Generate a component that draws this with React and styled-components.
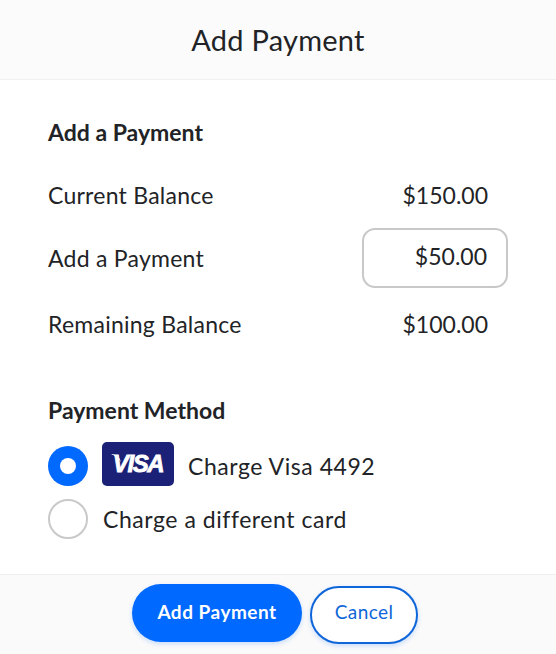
import React from "react";
import styled, { createGlobalStyle } from "styled-components";

const Global = createGlobalStyle`
  html, body { margin: 0; padding: 0; background: #fff; }
  body { font-family: "Lato", "Liberation Sans", sans-serif; color: #222326; }
`;

const Page = styled.div`
  width: 556px;
  height: 654px;
  display: flex;
  flex-direction: column;
  overflow: hidden;
`;

const Header = styled.header`
  height: 79px;
  flex: none;
  display: flex;
  align-items: center;
  justify-content: center;
  background: #fbfbfb;
  border-bottom: 1px solid #f0f0f0;
  font-size: 29px;
  letter-spacing: 0.25px;
`;

const Body = styled.main`
  flex: 1;
  padding: 39px 48px 0;
`;

const SectionTitle = styled.h2`
  margin: 0;
  height: 26px;
  line-height: 26px;
  font-size: 23px;
  font-weight: 700;
`;

const Row = styled.div`
  display: flex;
  align-items: center;
  justify-content: space-between;
  height: ${(p) => p.$h}px;
  margin-top: ${(p) => p.$mt}px;
  padding-right: ${(p) => (p.$flush ? 0 : 20)}px;
  font-size: 23px;
  letter-spacing: 0.25px;
`;

const Value = styled.span`
  letter-spacing: 0;
`;

const AmountBox = styled.div`
  width: 146px;
  height: 60px;
  box-sizing: border-box;
  display: flex;
  align-items: center;
  justify-content: flex-end;
  padding: 0 19px 5px 0;
  border: 2px solid #c8c8c8;
  border-radius: 13px;
  letter-spacing: 0;
`;

const MethodTitle = styled(SectionTitle)`
  margin-top: 58px;
`;

const Option = styled.div`
  display: flex;
  align-items: center;
  height: ${(p) => p.$h}px;
  margin-top: ${(p) => p.$mt}px;
  font-size: 23px;
  letter-spacing: 0.55px;
`;

const Radio = styled.span`
  width: 40px;
  height: 40px;
  box-sizing: border-box;
  flex: none;
  border-radius: 50%;
  border: ${(p) => (p.$on ? "none" : "2px solid #c9c9c9")};
  background: ${(p) => (p.$on ? "#0069ff" : "#fff")};
  display: flex;
  align-items: center;
  justify-content: center;
  margin-top: ${(p) => (p.$on ? 4 : 0)}px;
  &::after {
    content: "";
    display: ${(p) => (p.$on ? "block" : "none")};
    width: 16px;
    height: 16px;
    border-radius: 50%;
    background: #fff;
  }
`;

const VisaCard = styled.svg`
  width: 72px;
  height: 44px;
  flex: none;
  margin: 0 14px;
`;

const CardLabel = styled.span`
  margin-top: 3px;
`;

const PlainLabel = styled.span`
  margin-left: 15px;
`;

const Footer = styled.footer`
  height: 80px;
  flex: none;
  box-sizing: border-box;
  background: #fafafa;
  border-top: 1px solid #efefef;
  display: flex;
  gap: 8px;
  justify-content: center;
  padding: 9px 6px 0 0;
`;

const Primary = styled.button`
  width: 170px;
  height: 58px;
  border: none;
  border-radius: 29px;
  background: #0069ff;
  color: #fff;
  font: 700 19px "Lato", sans-serif;
  letter-spacing: 0.5px;
  box-shadow: 0 2px 5px rgba(0, 105, 255, 0.2);
  padding: 0 0 4px;
`;

const Secondary = styled.button`
  width: 108px;
  height: 58px;
  margin-top: 2px;
  box-sizing: border-box;
  border: 2px solid #0f66d8;
  border-radius: 29px;
  background: #fff;
  color: #0f66d8;
  font: 400 19px "Lato", sans-serif;
  letter-spacing: 0.4px;
  box-shadow: 0 2px 5px rgba(0, 105, 255, 0.2);
  padding: 0 0 7px;
`;

export default function App() {
  return (
    <Page>
      <Global />
      <Header>Add Payment</Header>
      <Body>
        <SectionTitle>Add a Payment</SectionTitle>
        <Row $h={30} $mt={35}>
          <span>Current Balance</span>
          <Value>$150.00</Value>
        </Row>
        <Row $h={60} $mt={18} $flush>
          <span>Add a Payment</span>
          <AmountBox>$50.00</AmountBox>
        </Row>
        <Row $h={30} $mt={21}>
          <span>Remaining Balance</span>
          <Value>$100.00</Value>
        </Row>
        <MethodTitle>Payment Method</MethodTitle>
        <Option $h={44} $mt={19}>
          <Radio $on />
          <VisaCard viewBox="0 0 72 44" role="img" aria-label="Visa">
            <rect width="72" height="44" rx="5" fill="#1a2176" />
            <text x="36" y="30" textAnchor="middle" fill="#fff" stroke="#fff" strokeWidth="0.8" fontFamily="Liberation Sans" fontSize="24" fontWeight="700" fontStyle="italic" letterSpacing="-1.4">VISA</text>
            <path d="M9 12c5 0 8 2 10 8-3-3.5-5.500-6-10-8z" fill="#fff" />
          </VisaCard>
          <CardLabel>Charge Visa 4492</CardLabel>
        </Option>
        <Option $h={40} $mt={13}>
          <Radio />
          <PlainLabel>Charge a different card</PlainLabel>
        </Option>
      </Body>
      <Footer>
        <Primary>Add Payment</Primary>
        <Secondary>Cancel</Secondary>
      </Footer>
    </Page>
  );
}
